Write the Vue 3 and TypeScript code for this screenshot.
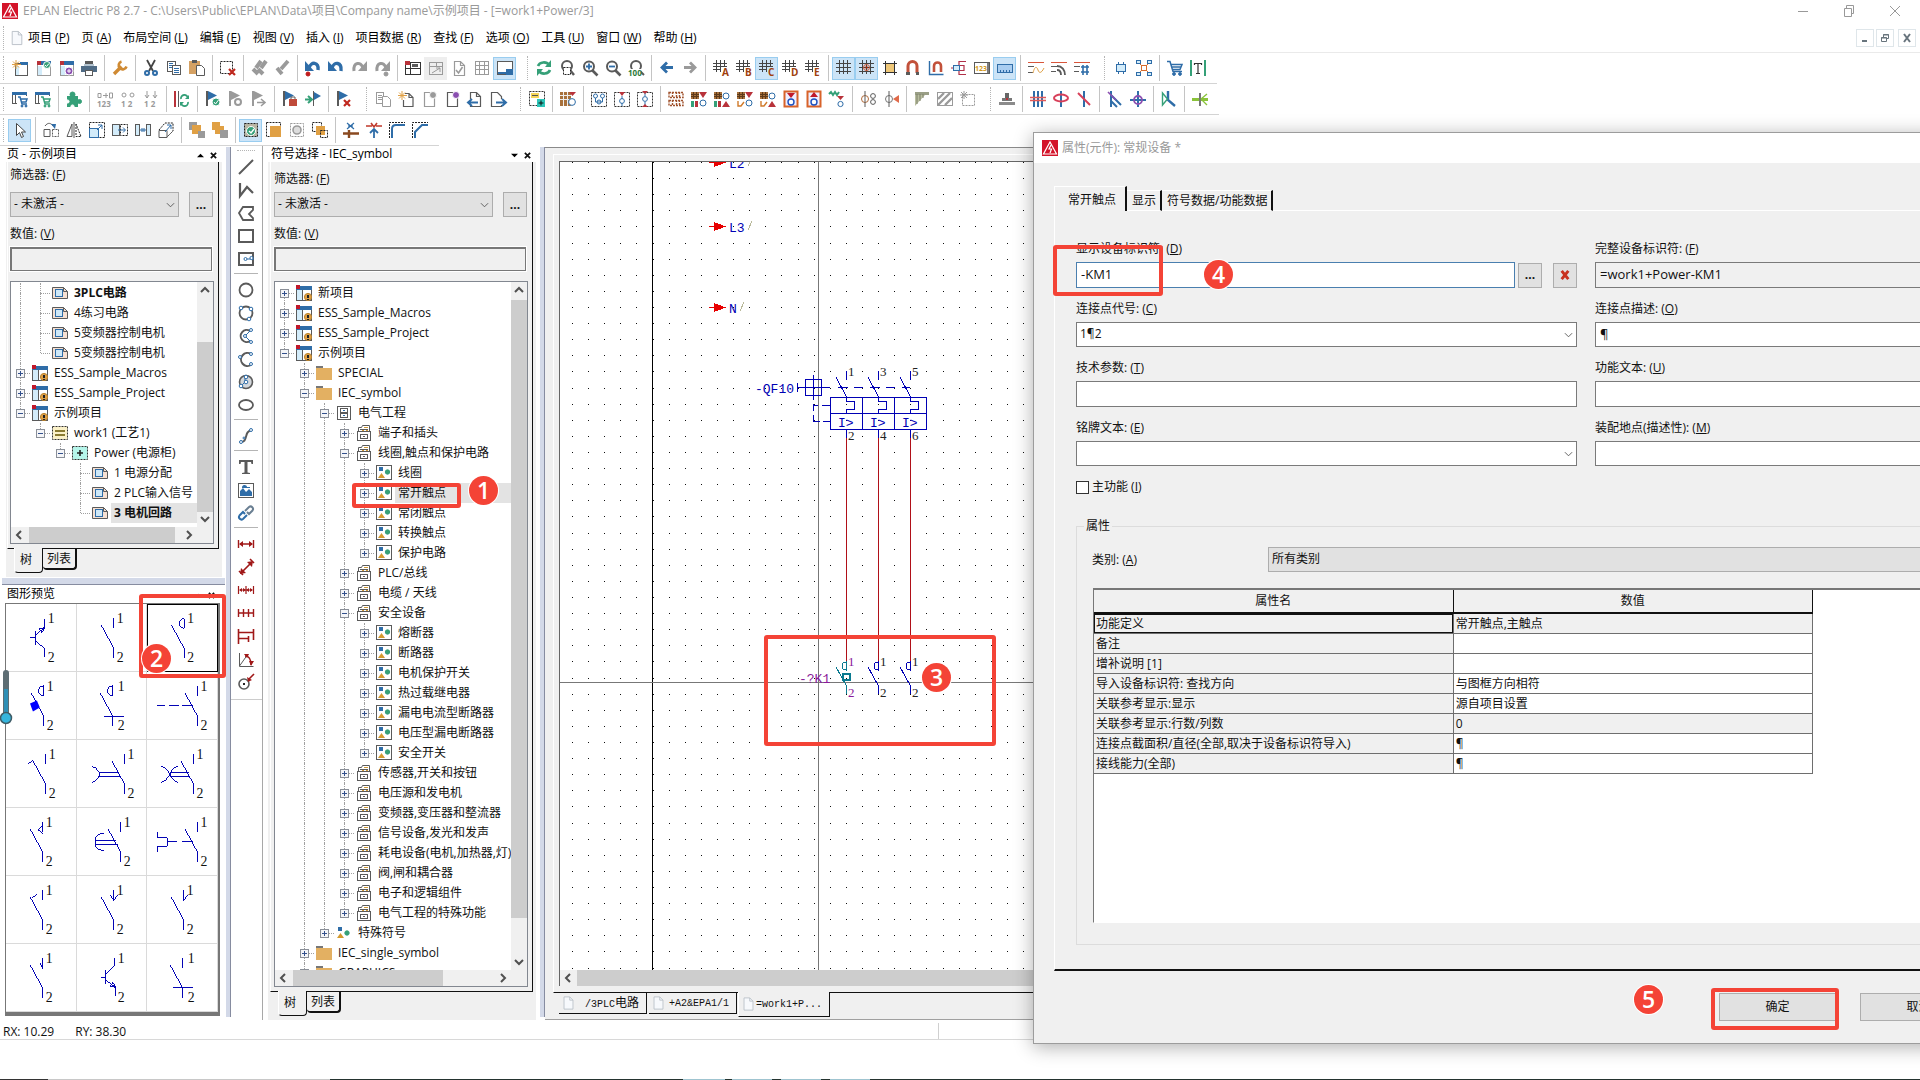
<script setup lang="ts">
const D = '#5a5a5a'
const B = '#2f6da8'
const R = '#b8323a'
const O = '#e0a044'
const G = '#35a078'
const P = '#8a4fb0'
const Y = '#9a9a9a'
const L = '#d3ecfa'

// Small SVG builders shared by the icon set
const p = (d: string, s = D, w = 1, x = '') => `<path d="${d}" fill="none" stroke="${s}" stroke-width="${w}" ${x}/>`
const f = (d: string, c = D) => `<path d="${d}" fill="${c}"/>`
const r = (x: number, y: number, w: number, h: number, c = D) => `<rect x="${x}" y="${y}" width="${w}" height="${h}" fill="${c}"/>`
const o = (x: number, y: number, w: number, h: number, s = D, c = 'none', x2 = '') =>
  `<rect x="${x + 0.5}" y="${y + 0.5}" width="${w - 1}" height="${h - 1}" fill="${c}" stroke="${s}" ${x2}/>`
const c = (x: number, y: number, q: number, s = D, fl = 'none', w = 1) =>
  `<circle cx="${x}" cy="${y}" r="${q}" fill="${fl}" stroke="${s}" stroke-width="${w}"/>`
const t = (x: number, y: number, s: string, col: string, size = 9) =>
  `<text x="${x}" y="${y}" font-size="${size}" font-weight="700" fill="${col}">${s}</text>`
const dash = 'stroke-dasharray="2 1"'
const star = p('M4 0v9M0 4.500h9M1 1.500l6 6M7 1.500l-6 6', O, 1)
const win = o(2, 1, 14, 15, Y, '#fff') + r(2, 1, 14, 4, B) + r(2, 1, 4, 4, R) + r(3, 6, 4, 9, L)
const page = (s = D) => p('M3.500 1.500h6l4 4v10h-10zM9.500 1.500v4h4', s, 1.2)
const grid = p('M3.500 0v14M7.500 0v14M11.500 0v14M0 3.500h15M0 7.500h15M0 11.500h15', '#444')
const gridS = p('M3.500 0v12M7.500 0v12M11.500 0v7M0 3.500h14M0 6.500h14M0 9.500h8', '#444')
const lens = c(7, 6.5, 5, D, 'none', 2) + p('M10.500 10.500l5 5', D, 2.6)
const flag = r(1, 0, 2, 15, D) + f('M3 0l9 4.500-9 4.500z', B)
const flagY = r(1, 0, 2, 15, Y) + f('M3 0l9 4.500-9 4.500z', Y)
const box = (s = '#333') => o(0, 1, 16, 15, s, 'none', dash)
const cart = (s: string) => p('M6 6h2l2 7h5M8 8h7l-1 3H9', s, 1.5) + c(10, 15, 1, s, s) + c(14, 15, 1, s, s)
const smallGrid = r(0, 1, 8, 7, '#a8713c') + p('M2.500 1v7M5.500 1v7M0 3.500h8M0 5.500h8', '#5c3a1a')
const tri = (x: number, y: number) => f(`M${x} ${y}h8l-4 6z`, R)
const triUp = (x: number, y: number) => f(`M${x} ${y}h8l-4 -6z`, R)
const orangeA = r(3, 3, 9, 9, O)

const icons: Record<string, string> = {
  newProject: o(3, 3, 13, 13, D, '#fff') + r(8, 2, 8, 3, B) + r(4, 6, 3, 9, L) + star,
  openProject: win + c(12, 5, 3.5, '#fff', G) + p('M10 5l1.500 1.500 2.500-3', '#fff'),
  closeProject: win + c(11, 11, 4, '#fff', P) + p('M9 11h4M11 9v4', '#fff'),
  printer: r(4, 1, 8, 4) + r(0, 6, 16, 6, '#4f6b85') + r(3, 4, 10, 2, '#b4c4d0') + o(4, 10, 8, 6, D, '#fff'),
  wrench: p('M2 14L9.500 6.500', '#cf8a33', 3.4) + p('M9.500 1.500a4 4 0 1 0 5 5', '#cf8a33', 2.6),
  cut: p('M4 0l6 11M12 0L6 11', '#444', 1.8) + c(4, 13, 2, B, 'none', 2) + c(12, 13, 2, B, 'none', 2),
  copy: o(1, 1, 9, 11, D, '#fff') + p('M3 3.500h4M3 5.500h5M3 7.500h5', B) + o(6, 5, 9, 10, D, '#fff') + p('M8 8.500h5M8 10.500h5M8 12.500h5', B),
  paste: r(0, 1, 11, 13, '#d5a163') + r(3, 0, 5, 3) + f('M8 6h4l3 3v6H8z', '#fff') + p('M7.500 5.500h5l3 3v7h-8z', D),
  delSel: o(0, 1, 13, 13, '#222', 'none', dash) + p('M9 9l6 6M15 9l-6 6', '#c0281e', 2.2),
  brushes: p('M2 9l5 5M10 1L5 8', Y, 4) + p('M7 9l5 5M15 1L10 8', Y, 4),
  brush: p('M3 8l5 6M14 1L7 9', Y, 3.8),
  undoDot: p('M4 8C6 1 14 2 13 10', B, 3.4) + f('M0 1v10h9z', B) + c(3, 14, 2, '#c01a1a', '#c01a1a'),
  undo: p('M4 8C6 1 14 2 13 11', B, 3.4) + f('M0 1v10h9z', B),
  redo: p('M12 8C10 1 2 2 3 11', Y, 3) + f('M16 1v10H7z', Y),
  redoDot: p('M12 8C10 1 2 2 3 11', Y, 3) + f('M16 1v10H7z', Y) + c(12, 14, 2, Y, Y),
  layout: o(0, 2, 16, 13, '#333', '#fff') + p('M5.500 2v13M0 8.500h16', '#333') + r(0, 1, 5, 4, R) + r(7, 4, 6, 3, D),
  layoutOff: o(1, 2, 14, 13, Y) + p('M1 6.500h14M8.500 2v5M4 13l8-5M12 8v4M12 8H8', Y),
  docCheck: page(Y) + p('M5 10l2.500 3 4-6', Y, 1.6),
  table: o(1, 1, 14, 14, Y) + p('M5.500 1v14M10.500 1v14M1 5.500h14M1 9.500h14', Y),
  workspace: o(0, 1, 16, 14, D, '#fff') + r(1, 12, 8, 2, B) + r(9, 9, 7, 6, B),
  refresh: p('M2 6a6 5 0 0 1 11-1M14 10a6 5 0 0 1-11 1', G, 2.6) + f('M15 0v7H9zM1 16V9h6z', G),
  zoomBox: c(8, 6, 5, D, 'none', 2) + p('M11 10l4 5', D, 2.4) + o(4, 7, 8, 8, '#222', '#fff', dash),
  zoomIn: lens + p('M4 6.500h6M7 3.500v6', B, 1.8),
  zoomOut: lens + p('M4 6.500h6', B, 1.8),
  zoom100: c(8, 6, 5, D, 'none', 2) + p('M11 10l5 5', D, 2) + r(1, 9, 12, 7, '#fff') + t(0, 16, '100', '#2c7a3a', 8),
  back: p('M14 7.500H4M8 2.500l-5 5 5 5', B, 2.8),
  forward: p('M2 7.500h10M8 2.500l5 5-5 5', Y, 2.8),
  gridA: gridS + t(9, 16, 'A', '#a0410d', 10),
  gridB: gridS + t(9, 16, 'B', '#a0410d', 10),
  gridC: gridS + t(9, 16, 'C', '#a0410d', 10),
  gridD: gridS + t(9, 16, 'D', '#a0410d', 10),
  gridE: gridS + t(9, 16, 'E', '#a0410d', 10),
  grid,
  gridSnap: grid + c(7.5, 7.5, 3, '#d8552a') + c(7.5, 7.5, 1, '#a03010', '#a03010'),
  frame: o(3, 3, 10, 10, '#333', '#f0c878') + p('M3.500 1v14M12.500 1v14M1 3.500h14M1 12.500h14', '#333'),
  magnet: p('M3 13V6a4.500 4.500 0 0 1 9 0v7', '#c2513a', 3) + r(1, 12, 4, 3, D) + r(11, 12, 3, 3, D),
  magnetAxis: p('M1.500 1v13.500h14', B, 1.4) + p('M6 12V6a3 3 0 0 1 7 0v6', '#c2513a', 2.6),
  plug: p('M15 1.500H8v4M15 14.500H8v-4M3 5.500h10v5H3M0 8h3', '#b03048', 1.2) + o(2, 5, 7, 6, B, L),
  input123: o(0, 2, 16, 12, D, '#fff') + t(1, 11, '123', '#d39a20', 7) + p('M14 3v10', '#222', 1.2),
  ruler: o(0, 4, 16, 9, B, '#a9cdf0') + p('M3.500 10v2M6.500 10v2M9.500 10v2M12.500 10v2', B),
  wave: p('M0 2.500h16', '#d8553a') + p('M0 6.500h6M0 12.500h5', D) + p('M5 13c2-8 4-6 5-3s3 4 6-2', O),
  arcs: p('M0 2.500h16', '#d8553a') + p('M0 6.500h6M0 11.500h5', D) + p('M6 6c5 0 8 4 8 9M6 10c3 0 4 2 4 5', D, 1.8),
  hatch: p('M0 2.500h16', '#d8553a') + p('M0 6.500h6M0 11.500h5', D) + p('M7 7h8M7 12h8M9 5v10M13 5v10', B, 1.6),
  chip: o(3, 4, 10, 8, B, L) + p('M5.500 2v2M10.500 2v2M5.500 12v2M10.500 12v2', B),
  network: o(5, 5, 6, 6, '#d86b2a', '#fff') + p('M5 5L2 2M11 5l3-3M5 11l-3 3M11 11l3 3', '#d86b2a') + o(0, 0, 5, 4, B, L) + o(11, 0, 5, 4, B, L) + o(0, 12, 5, 4, B, L) + o(11, 12, 5, 4, B, L),
  cart: p('M0 1.500h3l3 10h9M4 4.500h11l-2 5H5M4 7h10', B, 1.5) + c(7, 14, 1.4, B, B) + c(13, 14, 1.4, B, B),
  textBars: r(0, 0, 2, 16, G) + r(14, 0, 2, 16, G) + p('M4 3.500h8M8 3v10M6 13.500h4M4.500 3v2M11.500 3v2', '#333', 1.2),

  cartBlue: o(0, 1, 15, 12, D, '#fff') + r(0, 1, 15, 3, B) + p('M3.500 4v9', D) + r(5, 5, 11, 11, '#fff') + cart(B),
  cartGreen: o(0, 1, 15, 12, D, '#fff') + r(0, 1, 15, 3, B) + p('M3.500 4v9', D) + r(5, 5, 11, 11, '#fff') + cart(G),
  puzzle: r(1, 5, 11, 11, G) + c(6.5, 3.5, 2.5, G, G) + c(13.5, 10.5, 2, G, G) + c(1.5, 10.5, 1.6, '#fff', '#fff') + c(6.5, 15.5, 1.6, '#fff', '#fff'),
  numA: p('M1 2.500h3v4H1zM6 4.500h5M9 2v5M12.500 2v5h3v-5z', Y) + t(0, 16, '123', Y, 8),
  numB: c(4, 4, 2, Y) + c(12, 4, 2, Y) + t(1, 16, '1 2', Y, 8),
  numC: p('M4 0v7M12 0v7M2 4l2 3 2-3M10 4l2 3 2-3', Y) + t(1, 16, '1 2', Y, 8),
  barsRefresh: r(0, 0, 2, 16, R) + r(4, 0, 1, 16, D) + p('M7 8a3.500 3.500 0 0 1 7-1M14 11a3.500 3.500 0 0 1-7 1', G, 1.8) + f('M15 4v4h-4zM6 15v-4h4z', G),
  flagOk: flag + c(11, 11, 4, '#fff', G) + p('M9 11l1.500 2 3-4', '#fff'),
  flagGear: flagY + c(10, 11, 3, Y, '#fff', 2),
  flagNext: flagY + p('M6 11.500h7M10 8l4 3.500-4 3.500', Y, 1.6),
  flagLock: flag + r(7, 8, 8, 7, '#c04a3a') + p('M9 8V6h4v2', D),
  flagGo: p('M0 8.500h6M3 5l4 3.500L3 12', G, 2) + r(8, 0, 1, 15, D) + f('M9 1l7 4-7 4z', B),
  flagX: flag + p('M8 9l6 6M14 9l-6 6', '#c0281e', 2.2),
  pagesOff: o(1, 1, 8, 12, Y) + p('M3 4.500h4M3 6.500h4M3 8.500h4', Y) + f('M8 6h4l3 3v6H8z', '#fff') + p('M7.500 5.500h5l3 3v7h-8z', Y),
  pageNew: p('M7 2.500h4l4 4v9H5.500V9M11 2.500v4h4', D, 1.2) + star,
  pageOff: page(Y) + c(12, 4, 3.5, '#fff', Y),
  pagePurple: page() + c(12, 4, 3.5, '#fff', P),
  pageBack: page() + r(0, 8, 9, 6, '#fff') + p('M11 11.500H2M5 8l-4 3.500L5 15', B, 2),
  pageNext: p('M1.500 1.500h6l4 4v10h-10z', D, 1.2) + r(7, 8, 9, 6, '#fff') + p('M6 11.500h9M12 8l4 3.500-4 3.500', B, 2),
  boxPlus: o(0, 0, 16, 15, '#333', 'none', dash) + r(2, 2, 8, 5, '#f5d65a') + p('M3 4.500h6', '#555') + r(8, 8, 8, 8, '#2cc5b8') + p('M9.500 12h5M12 9.500v5', '#111'),
  wall: r(0, 1, 11, 14, '#a8713c') + p('M3.500 1v14M7.500 1v14M0 4.500h11M0 8.500h11', '#eee') + f('M9 1h7l-3.500 4z', R) + c(12, 11, 3.4, B, '#fff'),
  dashA: box() + c(4.5, 5, 2, B) + c(11.5, 5, 2, B) + c(8, 11, 2, B) + p('M4.500 7v4h7V7', B),
  dashB: box() + c(8, 10, 2.4, B) + p('M8 5v3M8 12v3', B) + f('M5 1h6l-3 4z', R),
  dashC: box() + c(8, 8, 2.4, B) + p('M8 0v5M8 11v5', B) + f('M5 0h6l-3 3zM5 16h6l-3-3z', R),
  meshOrange: p('M1 1.500h14v5H1zM1 9.500h14v5H1zM4.500 1v5M8.500 1v5M11.500 1v5M4.500 9v6M8.500 9v6M11.500 9v6', '#a0522d', 1.4, 'stroke-dasharray="2 1"'),
  devA: smallGrid + tri(8, 1) + c(12, 12, 3, B, '#fff') + r(0, 10, 3, 6, G) + r(4, 10, 3, 6, R),
  devB: smallGrid + c(12, 5, 3, B, '#fff') + triUp(8, 16) + r(0, 10, 3, 6, G) + r(4, 10, 3, 6, R),
  devC: smallGrid + tri(8, 1) + c(12, 12, 3, B, '#fff') + p('M1 10v5h3l3-4', '#d07a2a', 1.4),
  devD: smallGrid + c(12, 5, 3, B, '#fff') + triUp(8, 16) + p('M1 10v5h3l3-4', '#d07a2a', 1.4),
  boxDown: o(1, 0, 14, 16, '#d8632a', '#eef', 'stroke-width="2"') + f('M4 2h8l-4 5z', '#c0182a') + c(8, 11, 3, '#1c50c0', '#fff', 1.4),
  boxUp: o(1, 0, 14, 16, '#d8632a', '#eef', 'stroke-width="2"') + f('M4 6h8L8 1z', '#c0182a') + c(8, 11, 3, '#1c50c0', '#fff', 1.4),
  coil: p('M0 3l2-2 2 3 2-3 2 3 2-3', G, 2) + f('M8 5h7l-3.500 4z', R) + c(11.5, 13, 2.6, B),
  sensA: c(5, 8, 3.5, '#b06a3a') + p('M5 0v16', D) + c(13, 5, 2.4, D) + c(13, 11, 2.4, D),
  sensB: c(6, 8, 3.5, '#777') + p('M6 0v16', D) + f('M10 8l6-4v8z', '#e06a4a'),
  dims: r(1, 1, 14, 3, '#9a9f86') + f('M1 4h10L1 15z', '#b9bea0') + p('M3 3v10M6 3v7M9 3v4', '#7c8068'),
  stripes: o(0, 1, 16, 14, Y) + p('M1 8l6-6M1 14L13 2M8 14l7-7', Y, 2.4),
  starBox: o(2, 3, 13, 12, Y, 'none', dash) + p('M4 0v8M0 4h8M1 1l6 6M7 1l-6 6', Y),
  stamp: r(0, 11, 16, 3, '#8b8b8b') + r(3, 7, 10, 3, '#777') + r(6, 2, 4, 5, '#666') + r(7, 7, 2, 2, R),
  bars3: r(3, 0, 2, 16, B) + r(7, 0, 2, 16, B) + r(11, 0, 2, 16, B) + p('M0 6.500h16M0 9.500h16', '#e05a5a', 1.4),
  ellip: p('M8 0v16', B, 2) + '<ellipse cx="8" cy="7" rx="7" ry="3.500" fill="none" stroke="#d8405a" stroke-width="2"/>',
  slash: p('M8 0v16', B, 2) + p('M2 2l12 12', '#d8405a', 2),
  jumpA: p('M4 0v16M4 4l10 10M4 10l6 6', B, 2) + p('M1 1l8 8', P, 1.6),
  jumpB: p('M8 0v16M0 9h16', B, 2) + c(8, 9, 4, P, 'none', 1.8),
  jumpC: p('M7 0v9l7 6', B, 2.4) + p('M1.500 2v12l5-6z', G, 1.4),
  cable: r(0, 7, 16, 3, '#8ac33a') + r(7, 2, 2, 13, '#777') + p('M9 8l6-5M9 8l6 6', '#8ac33a', 1.4),

  cursor: '<path d="M4.500 1.500v12l3-3 2 5 2-1-2-4.500h4z" fill="#fff" stroke="#444"/>',
  rotate: p('M1 7.500h6v7H1zM2 4c3-4 6-3 8 0', D) + f('M8 2l5 0-1 5z', B) + o(9, 7, 7, 8, D, 'none', dash),
  mirror: p('M6 2v12.500H1zM8 0v16', D) + p('M10 2v12.500h5z', '#222', 1, dash),
  scale: o(0, 0, 16, 16, '#222', 'none', dash) + o(0, 6, 10, 10, B, L) + p('M8 8l5-5M9 3h4v4', B),
  stretch: o(0, 2, 8, 12, D, L) + o(8, 2, 8, 12, '#222', 'none', dash) + p('M6 8h7M11 5.500l2.500 2.500-2.500 2.500', B),
  space: o(0, 2, 5, 12, D, L) + o(11, 2, 5, 12, D, L) + p('M5 8h6M7 6v4M9 6v4', B),
  shear: p('M1 8.500h8v7H1z', D) + p('M1 8l6-7h8v8l-6 6', '#222', 1, dash) + p('M7 10l6-7M9 3h4v4', B),
  groupA: r(0, 0, 8, 8, Y) + orangeA + r(9, 9, 7, 7, Y),
  groupB: r(0, 0, 8, 8, O) + r(3, 4, 9, 8, O) + r(8, 8, 8, 8, Y),
  selOk: o(1, 1, 14, 14, '#222', '#b9b4a2', dash) + c(8, 9, 4.5, '#fff', G) + p('M6 9l2 2 3-4', '#fff', 1.4),
  selA: o(0, 0, 15, 15, '#222', 'none', dash) + r(4, 4, 11, 11, O),
  selB: o(1, 1, 14, 14, Y, 'none', dash) + c(8, 8, 4, Y, '#ddd', 1.6),
  selC: o(0, 0, 10, 10, '#222', 'none', dash) + r(4, 4, 9, 9, O) + o(8, 8, 8, 8, '#222', 'none', dash),
  trim: p('M0 11.500h16M6 8v8', '#8a4a20', 2.4) + p('M4 1l7 6M11 1L4 7M5 4h5', B, 1.2),
  extend: p('M0 4h6M10 4h6M5 1l3 4 3-4', '#c0392b', 1.6) + p('M8 16V7M4 11l4-4 4 4', B, 1.8),
  chamferA: p('M3 16V7c0-3 1-4 4-4h9', B, 2) + p('M.5 16V.5H16', '#222', 1, dash),
  chamferB: p('M3 16V10L10 3h6', B, 2) + p('M.5 16V.5H16', '#222', 1, dash),

  line: p('M1 15L15 1', D, 2),
  polyline: p('M2 1v13L9 5l6 6', D, 2.2),
  polygon: p('M5 2h10v3l-4 4 4 4v2H5L1 8z', D, 1.8),
  rect: p('M1 2h14v12H1z', D, 2),
  rectHandle: p('M1 2h14v12H1z', D, 2) + p('M7 8h9', B) + c(7.5, 8, 1.5, B, '#fff') + c(13.5, 7, 1.6, B, '#fff'),
  circle: c(8, 8, 6.5, D, 'none', 1.8),
  circle3: c(8, 8, 6.5, D, 'none', 1.8) + c(3, 3, 1.8, B, '#fff') + c(13, 4, 1.8, B, '#fff') + c(11, 14, 1.8, B, '#fff'),
  arcA: p('M12 3a6 6 0 1 0 0 10', D, 2) + p('M12 3L7 8l6 6', B) + c(13, 2, 1.5, B, '#fff') + c(7, 8, 1.5, B, '#fff') + c(13, 14, 1.5, B, '#fff'),
  arcB: p('M13 3a6.500 6.500 0 1 0 0 11', D, 2) + c(13, 3, 1.5, B, '#fff') + c(2, 6, 1.5, B, '#fff') + c(13, 13, 1.5, B, '#fff'),
  sector: c(8, 8, 6.5, D, '#d4d8dc', 1.6) + p('M7 1v7l-5 5', B) + c(8, 3, 1.8, B, '#fff') + c(8, 8, 1.8, B, '#fff') + c(3, 12, 1.8, B, '#fff'),
  ellipse: '<ellipse cx="8" cy="8" rx="7" ry="5" fill="none" stroke="#5a5a5a" stroke-width="1.800"/>',
  spline: p('M2 14c9 1 3-11 12-12', D, 2) + c(3, 14, 1.5, B, '#fff') + c(13, 2, 1.5, B, '#fff') + c(6, 10, 1, B, '#fff'),
  text: f('M1 1h14v4h-1.500L13 3H9.500v10.500l2.500.5v1H4v-1l2.500-.5V3H3l-.5 2H1z'),
  image: o(0, 1, 16, 15, D, '#fff') + f('M2 14V9l3-3 3 4 3-3 3 3v4z', B) + f('M4 5c1-3 5-2 5 0h3v1H4z', B),
  link: p('M7 9L5 7l-3.500 3.500a2.500 2.500 0 0 0 3.500 3.500l4-4', B, 2) + p('M9 7l2 2 3.500-3.500A2.500 2.500 0 0 0 11 2L7 6', '#6a7f92', 2),
  dimH: p('M.5 4v8M15.500 4v8M2 8h12', '#a01818', 1.4) + f('M1 8l4-3v6zM15 8l-4-3v6z', '#a01818'),
  dimD: p('M1 12l4 4M12 0l4 4M4 13L13 4', '#a01818', 1.6) + f('M2 15l1-6 5 5zM15 2l-6 1 5 5z', '#a01818'),
  dimC: p('M.5 4v8M15.500 4v8M8 4v8M2 8h12', '#a01818', 1.2) + f('M1 8l3-2v4zM15 8l-3-2v4zM8 8L5 6v4zM8 8l3-2v4z', '#a01818'),
  dimI: p('M.5 4v8M15.500 4v8M5.500 4v8M10.500 4v8M1 8h14', '#a01818', 1.4),
  dimB: p('M.5 1v15M15.500 1v11M10.500 8v6M1 4.500h14M1 10.500h9', '#a01818', 1.6),
  dimAngle: p('M1.500 2v13.500h14M1.500 15L10 3', D) + p('M7 5c4 0 6 4 6 9', '#a01818', 1.4) + f('M6 3l5 0-2 4zM11 10h5l-3 5z', '#a01818'),
  dimRadius: c(6, 10, 5, D, 'none', 1.6) + r(5, 9, 2, 2, '#222') + p('M16 0l-5 5', '#a01818', 1.6) + f('M9 3l1 5 4-2z', '#a01818'),

  proj: o(0, 1, 16, 15, D, '#fff') + r(0, 1, 16, 4, B) + r(0, 0, 4, 4, '#c0182a') + r(1, 5, 5, 10, L) + p('M6.500 5v10', D) + c(12, 12, 3.6, '#b9822e', O) + r(11, 10, 2, 3, '#222') + r(11, 14, 2, 1, '#222'),
  sheet: '<path d="M.5 2.500h11l4 4v7H.5z" fill="#f6e0d2" stroke="#5a5a5a"/>' + o(3, 4, 8, 8, B, '#cfe8f7') + p('M11.500 2.500v4h4', D),
  plant: o(0, 1, 16, 14, '#333', '#fbf1c8', dash) + r(3, 5, 10, 2, '#8a7a30') + r(3, 9, 10, 2, '#8a7a30'),
  place: o(0, 1, 16, 14, '#333', '#b5f5ea', dash) + p('M5 8h6M8 5v6', '#222', 1.6),
  folder: r(0, 1, 7, 3, '#777') + r(0, 3, 16, 12, '#e3b062'),
  cabinet: o(1, 1, 14, 14, D, '#fff') + o(4, 3, 8, 5, D) + o(4, 8, 8, 5, D) + r(7, 5, 2, 1, B) + r(7, 10, 2, 1, B),
  drawer: o(1, 6, 14, 10, D, '#fff') + o(4, 9, 8, 5, D) + r(7, 11, 2, 1, D) + p('M2.500 6V2.500h3l1-2h7v6M4 4.500h8', D) + p('M8 2.500h4M6 5.500h2M10 5.500h2', '#cf9a3a'),
  symbols: o(0, 0, 16, 15, D, '#fff') + r(3, 2, 4, 4, B) + f('M2 13l3.500-5L9 13z', '#d39a2e') + c(11.5, 7, 2.2, G, G),
  symbolsBare: r(2, 2, 4, 4, B) + f('M1 13l3.500-5L8 13z', '#d39a2e') + c(11, 8, 2.2, G, G),
  doc: '<path d="M2.500.5h7l4 4v11h-11z" fill="#f7f9fc" stroke="#b5bcc4"/>' + p('M9.500.500v4h4', '#b5bcc4'),
  logo: r(0, 0, 16, 16, '#d31329') + p('M8 2L1.500 14h13z', '#fff', 1.2) + p('M9 5L7 9h2.500L8 13', '#fff', 1.2),
}

const toolbars = [
  'newProject openProject closeProject printer | wrench | cut copy paste | delSel | brushes brush | undoDot undo redo redoDot | layout layoutOff~ docCheck table workspace* : refresh zoomBox zoomIn zoomOut zoom100 | back forward | gridA gridB gridC* gridD gridE | grid* gridSnap* frame magnet magnetAxis plug input123 ruler* | wave arcs hatch : chip network | cart textBars',
  'cartBlue cartGreen | puzzle | numA numB numC | barsRefresh | flagOk flagGear flagNext | flagLock flagGo | flagX : pagesOff pageNew pageOff pagePurple pageBack pageNext : boxPlus | wall | dashA dashB dashC | meshOrange devA devB devC devD boxDown boxUp coil | sensA sensB | dims stripes starBox : stamp | bars3 ellip slash | jumpA jumpB | jumpC | cable',
  'cursor* | rotate mirror scale stretch space shear | groupA groupB | selOk* selA selB selC | trim extend chamferA chamferB',
].map((row) => row.split(' '))

const drawTools = 'line polyline polygon rect rectHandle | circle circle3 arcA arcB sector ellipse | spline | text image link | dimH dimD dimC dimI dimB dimAngle dimRadius'.split(' ')
const iconName = (s: string) => s.replace(/[*~]/, '')

const menus = [
  ['项目', 'P'], ['页', 'A'], ['布局空间', 'L'], ['编辑', 'E'], ['视图', 'V'], ['插入', 'I'],
  ['项目数据', 'R'], ['查找', 'F'], ['选项', 'O'], ['工具', 'U'], ['窗口', 'W'], ['帮助', 'H'],
]

interface Node { level: number; icon: string; text: string; mark?: string; bold?: boolean; on?: boolean }
interface Row extends Node { cells: { up: boolean; down: boolean; own: boolean }[] }

// Works out which dotted guide segments each row of a flat tree needs
function withGuides(nodes: Node[], startsInside: boolean): Row[] {
  return nodes.map((n, i) => {
    const continues = (level: number) => {
      for (const m of nodes.slice(i + 1)) {
        if (m.level < level) return false
        if (m.level === level) return true
      }
      return false
    }
    const cells = Array.from({ length: n.level + 1 }, (_, level) => {
      const own = level === n.level
      const down = continues(level)
      return { own, down, up: own ? i > 0 || startsInside : down }
    })
    return { ...n, cells }
  })
}
const n = (level: number, icon: string, text: string, mark = '', bold = false, on = false): Node => ({ level, icon, text, mark, bold, on })

const pageTree = withGuides([
  n(1, 'sheet', '3PLC电路', '', true), n(1, 'sheet', '4练习电路'), n(1, 'sheet', '5变频器控制电机'), n(1, 'sheet', '5变频器控制电机'),
  n(0, 'proj', 'ESS_Sample_Macros', '+'), n(0, 'proj', 'ESS_Sample_Project', '+'), n(0, 'proj', '示例项目', '-'),
  n(1, 'plant', 'work1 (工艺1)', '-'), n(2, 'place', 'Power (电源柜)', '-'),
  n(3, 'sheet', '1 电源分配'), n(3, 'sheet', '2 PLC输入信号'), n(3, 'sheet', '3 电机回路', '', true, true),
], true)

const symbolTree = withGuides([
  n(0, 'proj', '新项目', '+'), n(0, 'proj', 'ESS_Sample_Macros', '+'), n(0, 'proj', 'ESS_Sample_Project', '+'), n(0, 'proj', '示例项目', '-'),
  n(1, 'folder', 'SPECIAL', '+'), n(1, 'folder', 'IEC_symbol', '-'), n(2, 'cabinet', '电气工程', '-'),
  n(3, 'drawer', '端子和插头', '+'), n(3, 'drawer', '线圈,触点和保护电路', '-'),
  n(4, 'symbols', '线圈', '+'), n(4, 'symbols', '常开触点', '+', false, true), n(4, 'symbols', '常闭触点', '+'),
  n(4, 'symbols', '转换触点', '+'), n(4, 'symbols', '保护电路', '+'),
  n(3, 'drawer', 'PLC/总线', '+'), n(3, 'drawer', '电缆 / 天线', '+'), n(3, 'drawer', '安全设备', '-'),
  n(4, 'symbols', '熔断器', '+'), n(4, 'symbols', '断路器', '+'), n(4, 'symbols', '电机保护开关', '+'), n(4, 'symbols', '热过载继电器', '+'),
  n(4, 'symbols', '漏电电流型断路器', '+'), n(4, 'symbols', '电压型漏电断路器', '+'), n(4, 'symbols', '安全开关', '+'),
  n(3, 'drawer', '传感器,开关和按钮', '+'), n(3, 'drawer', '电压源和发电机', '+'), n(3, 'drawer', '变频器,变压器和整流器', '+'),
  n(3, 'drawer', '信号设备,发光和发声', '+'), n(3, 'drawer', '耗电设备(电机,加热器,灯)', '+'), n(3, 'drawer', '阀,闸和耦合器', '+'),
  n(3, 'drawer', '电子和逻辑组件', '+'), n(3, 'drawer', '电气工程的特殊功能', '+'), n(2, 'symbolsBare', '特殊符号', '+'),
  n(1, 'folder', 'IEC_single_symbol', '+'), n(1, 'folder', 'GRAPHICS', '+'),
], false)

const panels = [
  { key: 'pages', title: '页 - 示例项目', rows: pageTree, v: [60, 170], h: [18, 146], caret: 'M0 6l4-4 4 4z' },
  { key: 'symbols', title: '符号选择 - IEC_symbol', rows: symbolTree, v: [18, 618], h: [18, 150], caret: 'M0 2h8l-4 4z' },
]

// Contact symbols of the preview grid; x is the column of the connection line
const blade = (x: number, s = 14) => `M${x - 13} 21L${x} 45v10M${x} ${s}V24`
const dome = (x: number) => `M${x} 14c-7 0-7 10 0 10`
const previews = [
  { x: 39, d: 'M39 15v9L30 31M30 27v15M24 34h6M30 38l9 7v9M39 24l-6 1M39 24l-3 5M33 25l3 4' },
  { x: 37, d: blade(37) },
  { x: 37, d: blade(37) + dome(37), on: true },
  { x: 38, d: blade(38) + dome(38), fill: 'M24 32l7-3 3 7-7 4z' },
  { x: 36, d: blade(36) + dome(36) + 'M27 45h20', dx: 2 },
  { x: 51, d: blade(51) + 'M10 34h8M22 34h10M35 34h11' },
  { x: 40, d: blade(40) + 'M27 21l-5 3' },
  { x: 48, d: blade(48) + 'M22 33h20M22 37h21M22 33v4M15 27q4 0 7 6M15 43q5-1 7-6' },
  { x: 47, d: blade(47) + 'M23 33h19M23 37h20M23 33v4M14 27q5 0 9 8M14 43q5-1 9-8M31 27q-5 0-8 8M31 43q-5-1-8-8' },
  { x: 37, d: blade(37) + 'M37 17l-5 5 5 4' },
  { x: 44, d: blade(44) + 'M18 33h21M18 37h23M27 26q-9 0-9 7M27 43q-9 0-9-7M18 33v4' },
  { x: 51, d: blade(51) + 'M10 24v6h10v9H10v6M20 34h10M35 34h11' },
  { x: 37, d: blade(37) + 'M26 22l5-3' },
  { x: 37, d: blade(37) + 'M33 19l4 6 4-6' },
  { x: 37, d: blade(37) + 'M37 25l4-6' },
  { x: 37, d: blade(37) + 'M37 25l-3-6' },
  { x: 38, d: 'M38 14v8L29 30M29 26v15M24 34h5M29 37l10 7v9M39 44l-6-1M39 44l-3-5M33 43l3-4' },
  { x: 36, d: blade(36) + 'M26 44h20', dx: 2 },
]

const gridXs = Array.from({ length: 84 }, (_, i) => Math.round(572 + i * 16.11))
const gridYs = Array.from({ length: 51 }, (_, i) => Math.round(162 + i * 16.11))
const dots = gridYs.map((y) => gridXs.map((x) => `M${x} ${y}h1v1h-1z`).join('')).join('')
const feeds = [{ y: 162, name: 'L2' }, { y: 226, name: 'L3' }, { y: 307, name: 'N' }]
const poles = [{ x: 846, a: '1', b: '2' }, { x: 878, a: '3', b: '4' }, { x: 910, a: '5', b: '6' }]

const props = [
  ['功能定义', '常开触点,主触点', 'g'], ['备注', '', ''], ['增补说明 [1]', '', ''], ['导入设备标识符: 查找方向', '与图框方向相符', ''],
  ['关联参考显示:显示', '源自项目设置', ''], ['关联参考显示:行数/列数', '0', 'g'],
  ['连接点截面积/直径(全部,取决于设备标识符导入)', '¶', ''], ['接线能力(全部)', '¶', ''],
]
</script>

<template>
  <div class="app">
    <header class="titlebar">
      <svg class="ico" viewBox="0 0 16 16" v-html="icons.logo" />
      <h1>EPLAN Electric P8 2.7 - C:\Users\Public\EPLAN\Data\项目\Company name\示例项目 - [=work1+Power/3]</h1>
      <div class="winbtns">
        <button aria-label="最小化"><svg viewBox="0 0 12 12"><path d="M1 6.500h10" /></svg></button>
        <button aria-label="还原"><svg viewBox="0 0 12 12"><path d="M1.500 3.500h7v8h-7zM3.500 3.500v-3h7v8h-2" /></svg></button>
        <button aria-label="关闭"><svg viewBox="0 0 12 12"><path d="M1 1l10 10M11 1L1 11" /></svg></button>
      </div>
    </header>

    <nav class="menubar">
      <i class="grip" />
      <svg class="ico" viewBox="0 0 16 16" v-html="icons.doc" />
      <a v-for="m in menus" :key="m[0]" href="#">{{ m[0] }} (<u>{{ m[1] }}</u>)</a>
      <div class="mdibtns">
        <button aria-label="最小化子窗口"><svg viewBox="0 0 10 10"><path d="M2 8h5" stroke-width="2" /></svg></button>
        <button aria-label="还原子窗口"><svg viewBox="0 0 10 10"><path d="M1.500 4.500h5v4h-5zM3.500 4V1.500h5v4H7M1 5h6M3 2h6" /></svg></button>
        <button class="last" aria-label="关闭子窗口"><svg viewBox="0 0 10 10"><path d="M2 1l6 8M8 1L2 9" stroke-width="2" /></svg></button>
      </div>
    </nav>

    <div v-for="(bar, bi) in toolbars" :key="bi" class="toolbar" role="toolbar">
      <i class="grip" />
      <template v-for="(tool, i) in bar" :key="i">
        <i v-if="tool === '|'" class="sep" />
        <i v-else-if="tool === ':'" class="grip mid" />
        <button v-else class="tool" :class="{ on: tool.endsWith('*'), off: tool.endsWith('~') }" :aria-label="iconName(tool)">
          <svg class="ico" viewBox="0 0 16 16" v-html="icons[iconName(tool)]" />
        </button>
      </template>
    </div>

    <main class="work">
      <template v-for="panel in panels" :key="panel.key">
        <div class="column" :class="panel.key">
          <section class="panel">
            <div class="panel-title">
              <h2>{{ panel.title }}</h2>
              <button aria-label="菜单"><svg viewBox="0 0 8 8"><path :d="panel.caret" /></svg></button>
              <button aria-label="关闭"><svg viewBox="0 0 8 8"><path d="M1 1l6 6M7 1L1 7" stroke="#111" stroke-width="2" /></svg></button>
            </div>
            <div class="panel-body">
              <div class="frame">
                <label class="filter-label" :for="panel.key + 'f'">筛选器: (<u>F</u>)</label>
                <div class="filter-row">
                  <div class="drop grey">
                    <select :id="panel.key + 'f'"><option>- 未激活 -</option></select>
                    <svg viewBox="0 0 10 6"><path d="M1 1l4 4 4-4" /></svg>
                  </div>
                  <button class="dots" aria-label="浏览">...</button>
                </div>
                <label class="value-label" :for="panel.key + 'v'">数值: (<u>V</u>)</label>
                <input :id="panel.key + 'v'" class="value-input" type="text" />
                <div class="treebox">
                  <ul class="tree">
                    <li v-for="(row, i) in panel.rows" :key="i">
                      <span v-for="(cell, k) in row.cells" :key="k" class="cell" :class="{ up: cell.up, down: cell.down, own: cell.own }">
                        <svg v-if="cell.own && row.mark" class="mark" viewBox="0 0 9 9">
                          <rect x=".5" y=".5" width="8" height="8" fill="#f4f5f8" stroke="#8a8f98" />
                          <path :d="row.mark === '+' ? 'M2 4.500h5M4.500 2v5' : 'M2 4.500h5'" stroke="#33508c" />
                        </svg>
                      </span>
                      <svg class="ico" viewBox="0 0 16 16" v-html="icons[row.icon]" />
                      <span class="name" :class="{ bold: row.bold, on: row.on }">{{ row.text }}</span>
                    </li>
                  </ul>
                  <div class="vbar">
                    <svg viewBox="0 0 10 10"><path d="M1 7l4-4 4 4" /></svg>
                    <svg viewBox="0 0 10 10"><path d="M1 3l4 4 4-4" /></svg>
                    <i class="thumb" :style="{ top: panel.v[0] + 'px', height: panel.v[1] + 'px' }" />
                  </div>
                  <div class="hbar">
                    <svg viewBox="0 0 10 10"><path d="M7 1L3 5l4 4" /></svg>
                    <svg viewBox="0 0 10 10"><path d="M3 1l4 4-4 4" /></svg>
                    <i class="thumb" :style="{ left: panel.h[0] + 'px', width: panel.h[1] + 'px' }" />
                  </div>
                  <i class="corner" />
                </div>
              </div>
              <div class="tabs">
                <button class="tab on">树</button>
                <button class="tab">列表</button>
              </div>
            </div>
          </section>

          <template v-if="panel.key === 'pages'">
            <i class="hsplit" />
            <section class="preview">
              <div class="panel-title">
                <h2>图形预览</h2>
                <button aria-label="菜单"><svg viewBox="0 0 8 8"><path d="M0 6l4-4 4 4z" /></svg></button>
                <button aria-label="关闭"><svg viewBox="0 0 8 8"><path d="M1 1l6 6M7 1L1 7" stroke="#111" stroke-width="2" /></svg></button>
              </div>
              <div class="sheet">
                <svg v-for="(s, i) in previews" :key="i" :class="{ on: s.on }" viewBox="0 0 70 68">
                  <path :d="s.d" fill="none" stroke="#0000b4" shape-rendering="crispEdges" />
                  <path v-if="s.fill" :d="s.fill" fill="#0000ff" />
                  <text :x="s.x + 3 + (s.dx ?? 0)" y="19">1</text>
                  <text :x="s.x + 3 + (s.dx ?? 0)" y="59">2</text>
                </svg>
              </div>
            </section>
          </template>
        </div>
        <i class="vsplit" />
        <div v-if="panel.key === 'pages'" class="drawbar" role="toolbar">
          <div class="drawset">
            <i class="hgrip" />
            <template v-for="(tool, i) in drawTools" :key="i">
              <i v-if="tool === '|'" class="hsep" />
              <button v-else class="tool" :aria-label="tool"><svg class="ico" viewBox="0 0 16 16" v-html="icons[tool]" /></button>
            </template>
          </div>
        </div>
      </template>

      <section class="editor">
        <div class="bevel">
          <div class="canvas">
            <svg class="drawing">
              <g transform="translate(-560 -162)" shape-rendering="crispEdges" fill="none">
                <path :d="dots" fill="#111" />
                <path d="M652.500 162v820" stroke="#000" />
                <path d="M818.500 162v820M560 682.500h1400" stroke="#777" />
                <g v-for="fd in feeds" :key="fd.name">
                  <path :d="`M709 ${fd.y + 0.5}h8`" stroke="#e00000" />
                  <path :d="`M714 ${fd.y - 4}l12 4.500-12 4.500z`" fill="#e80000" />
                  <text x="729" :y="fd.y + 6" class="mono">{{ fd.name }}</text>
                  <path :d="`M${fd.name === 'N' ? 740 : 748} ${fd.y + 4}l4-9`" stroke="#b9b99a" />
                </g>
                <text x="755" y="393" class="mono">-QF10</text>
                <g stroke="#0000b4">
                  <path d="M797.500 383v9M797 387.500h33M805.500 379.500h16v16h-16zM813.500 375v25M838 387.500h10M854 387.500h9M870 387.500h10M886 387.500h9M902 387.500h8" />
                  <path d="M813.500 404v7M813.500 415v6.500h6M813 405.500h5M822 405.500h8M823 421.500h7" />
                  <path d="M830.500 397.500h96v32h-96zM830.500 413.500h96M862.500 397.500v32M894.500 397.500v32" />
                  <path v-for="pl in poles" :key="pl.x" :d="`M${pl.x + 0.5} 371v9M${pl.x - 10} 377L${pl.x + 0.5} 397v4.500h8v8h-8v4M${pl.x + 0.5} 429v9`" />
                </g>
                <g v-for="(pl, i) in poles" :key="pl.a">
                  <text :x="pl.x - 8" y="427" class="mono">I&gt;</text>
                  <text :x="pl.x + 2" y="376" class="num">{{ pl.a }}</text>
                  <text :x="pl.x + 2" y="440" class="num">{{ pl.b }}</text>
                  <path :d="`M${pl.x + 0.5} 438v224`" stroke="#b01018" />
                  <path :d="`M${pl.x + 0.5} 661v9c-6 0-6-8 0-8M${pl.x - 10} 667L${pl.x + 0.5} 686v8`" :stroke="i ? '#0000b4' : '#0a7a90'" />
                  <text :x="pl.x + 2" y="666" class="num" :class="{ hot: !i }">1</text>
                  <text :x="pl.x + 2" y="697" class="num" :class="{ hot: !i }">2</text>
                </g>
                <path d="M843 674h7v6h-7z" stroke="#0a7a90" stroke-width="2" />
                <text x="799" y="683" class="mono hot">-?K1</text>
              </g>
            </svg>
            <div class="hbar wide">
              <svg viewBox="0 0 10 10"><path d="M7 1L3 5l4 4" /></svg>
              <i class="thumb rest" />
            </div>
          </div>
        </div>
        <div class="doctabs">
          <button class="doctab"><svg class="ico" viewBox="0 0 16 16" v-html="icons.doc" /><span>/3PLC<b>电路</b></span></button>
          <button class="doctab"><svg class="ico" viewBox="0 0 16 16" v-html="icons.doc" /><span>+A2&amp;EPA1/1</span></button>
          <button class="doctab on"><svg class="ico" viewBox="0 0 16 16" v-html="icons.doc" /><span>=work1+P...</span></button>
        </div>
      </section>
    </main>

    <footer class="status"><span>RX: 10.29</span><span>RY: 38.30</span></footer>
    <div class="taskbar"><i class="a" /><i class="b" /><i class="c" /></div>

    <section class="dialog" role="dialog" aria-label="属性(元件)">
      <div class="dlg-title"><svg class="ico" viewBox="0 0 16 16" v-html="icons.logo" /><h2>属性(元件): 常规设备 *</h2></div>
      <div class="dlg-tabs">
        <button class="on">常开触点</button><button>显示</button><button>符号数据/功能数据</button><i />
      </div>
      <form class="dlg-page" @submit.prevent>
        <div class="fields">
          <div class="field">
            <label for="dt">显示设备标识符: (<u>D</u>)</label>
            <div class="combo">
              <input id="dt" class="focus" type="text" value="-KM1" />
              <button type="button" class="dots" aria-label="浏览">...</button>
              <button type="button" class="dots clear" aria-label="清除"><svg viewBox="0 0 12 12"><path d="M2 1l8 10M10 1L2 11" stroke="#c8311e" stroke-width="3.500" /></svg></button>
            </div>
          </div>
          <div class="field"><label for="full">完整设备标识符: (<u>F</u>)</label><input id="full" class="ro" type="text" value="=work1+Power-KM1" readonly /></div>
          <div class="field">
            <label for="cp">连接点代号: (<u>C</u>)</label>
            <div class="drop"><select id="cp"><option>1¶2</option></select><svg viewBox="0 0 10 6"><path d="M1 1l4 4 4-4" /></svg></div>
          </div>
          <div class="field"><label for="cd">连接点描述: (<u>O</u>)</label><input id="cd" class="short" type="text" value="¶" /></div>
          <div class="field"><label for="tp">技术参数: (<u>T</u>)</label><input id="tp" type="text" /></div>
          <div class="field"><label for="ft">功能文本: (<u>U</u>)</label><input id="ft" type="text" /></div>
          <div class="field">
            <label for="np">铭牌文本: (<u>E</u>)</label>
            <div class="drop"><select id="np"><option></option></select><svg viewBox="0 0 10 6"><path d="M1 1l4 4 4-4" /></svg></div>
          </div>
          <div class="field"><label for="ml">装配地点(描述性): (<u>M</u>)</label><input id="ml" class="short" type="text" /></div>
        </div>
        <div class="check"><input id="mf" type="checkbox" /><label for="mf">主功能 (<u>I</u>)</label></div>
        <fieldset>
          <legend>属性</legend>
          <div class="category">
            <label for="cat">类别: (<u>A</u>)</label>
            <div class="drop grey"><select id="cat"><option>所有类别</option></select></div>
          </div>
          <div class="tablebox">
            <table>
              <thead><tr><th>属性名</th><th>数值</th></tr></thead>
              <tbody>
                <tr v-for="(row, i) in props" :key="row[0]">
                  <td class="g" :class="{ cur: i === 0 }">{{ row[0] }}</td><td :class="row[2]">{{ row[1] }}</td>
                </tr>
              </tbody>
            </table>
          </div>
        </fieldset>
      </form>
      <div class="dlg-foot"><button>确定</button><button>取消</button></div>
    </section>

    <svg class="thermo" viewBox="0 0 13 57">
      <rect x="3" y="1" width="6" height="46" rx="3" fill="#5d6d73" /><rect x="4" y="20" width="4" height="30" fill="#2f8fb5" />
      <circle cx="6" cy="49" r="5.500" fill="#35b5dd" stroke="#3f5c66" stroke-width="1.500" />
    </svg>
    <i class="box b1" /><i class="box b2" /><i class="box b3" /><i class="box b4" /><i class="box b5" />
    <span v-for="k in 5" :key="k" class="ball" :class="'n' + k">{{ k }}</span>
  </div>
</template>

<style>
body { margin: 0; background: #fff; }
</style>

<style scoped>
* { box-sizing: border-box; }
.app { position: relative; display: flex; flex-direction: column; width: 100%; height: 100vh; overflow: hidden; background: #fff; color: #111; font: 12px/18px "Open Sans", "Noto Sans CJK SC", sans-serif; }
button, input, select { font: inherit; color: inherit; margin: 0; border-radius: 0; }
button { padding: 0; border: 0; background: none; }
h1, h2 { margin: 0; font: inherit; white-space: nowrap; }
a { color: inherit; text-decoration: none; }
.ico { width: 16px; height: 16px; flex: none; overflow: visible; }

.titlebar { display: flex; align-items: center; height: 24px; padding: 0 18px 2px 2px; gap: 5px; color: #999; flex: none; }
.winbtns { display: flex; gap: 33px; margin-left: auto; }
.winbtns button { width: 13px; height: 14px; }
.winbtns svg { display: block; width: 12px; height: 12px; fill: none; stroke: #999; }
.menubar { display: flex; align-items: center; height: 29px; padding-right: 4px; border-bottom: 1px solid #eaeaea; flex: none; color: #000; }
.menubar a { margin-right: 12px; white-space: nowrap; }
.menubar .ico { width: 14px; margin: 0 4px 0 2px; }
.mdibtns { display: flex; gap: 2px; margin-left: auto; }
.mdibtns button { width: 18px; height: 18px; border: 1px solid #dfe6ea; }
.mdibtns .last { margin-left: 2px; }
.mdibtns svg { display: block; width: 10px; height: 10px; margin: 3px; fill: none; stroke: #68747d; }

.toolbar { display: flex; align-items: center; width: fit-content; height: 31px; padding-right: 8px; border-bottom: 1px solid #d4d4d4; flex: none; }
.grip { width: 1px; height: 24px; margin: 0 4px 0 3px; border-left: 1px dotted #b5b5b5; flex: none; }
.grip.mid { margin-left: 11px; }
.sep { width: 1px; height: 26px; margin: 0 3px 0 4px; background: #c4c4c4; flex: none; }
.tool { display: grid; place-items: center; width: 23px; height: 23px; flex: none; }
.tool.on { background: #cce4f7; border: 1px solid #99cdf0; }
.tool.off { background: #eee; }

.work { display: flex; flex: 1; min-height: 0; }
.column { display: flex; flex-direction: column; flex: none; min-height: 0; }
.column.pages { width: 226px; padding: 0 4px 0 6px; }
.column.symbols { width: 277px; padding: 0 4px 0 5px; }
.vsplit { width: 5px; margin: 1px 0 3px; background: #d3d9e8; border-right: 1px solid #868ca0; flex: none; }
.hsplit { height: 7px; margin: 1px -3px 0 -4px; background: #d3d9e8; border-bottom: 1px solid #868ca0; flex: none; }
.panel { display: flex; flex-direction: column; }
.pages .panel { height: 431px; flex: none; }
.symbols .panel { flex: 1; min-height: 0; }
.panel-title { display: flex; align-items: center; gap: 4px; height: 16px; padding: 0 3px 0 1px; flex: none; color: #000; }
.symbols .panel-title { padding-left: 3px; }
.panel-title h2 { flex: 1; }
.panel-title button { width: 9px; height: 10px; }
.panel-title svg { display: block; width: 7px; height: 7px; margin-top: 2px; }
.panel-body { display: flex; flex-direction: column; flex: 1; min-height: 0; background: #f0f0f0; }
.frame { display: flex; flex-direction: column; flex: 1; min-height: 0; margin: 0 3px 0 1px; padding: 0 4px 4px 2px; border-right: 1px solid #111; border-bottom: 1px solid #111; border-left: 1px solid #fff; }
.symbols .frame { margin-left: 2px; padding-left: 3px; }
.filter-label { height: 30px; padding-top: 4px; flex: none; }
.symbols .filter-label { padding-top: 8px; }
.filter-row { display: flex; gap: 10px; height: 25px; margin-right: 1px; flex: none; }
.filter-row .drop { flex: 1; }
.drop { position: relative; height: 25px; }
.drop select { width: 100%; height: 100%; padding: 0 3px 1px; border: 1px solid #7a7a7a; background: #fff; appearance: none; outline: 0; }
.drop.grey select { border-color: #adadad; background: #e1e1e1; }
.drop svg { position: absolute; right: 4px; top: 10px; width: 9px; height: 6px; fill: none; stroke: #555; }
.dots { width: 24px; height: 25px; border: 1px solid #adadad; background: #e1e1e1; font-weight: 700; }
.value-label { margin-top: 8px; height: 22px; flex: none; }
.value-input { height: 24px; margin-right: 2px; border: 2px solid #777; border-right-width: 1px; border-bottom-width: 1px; outline: 1px solid #fff; background: #f0f0f0; flex: none; }
.treebox { display: grid; grid-template-columns: 1fr 16px; grid-template-rows: 1fr 16px; flex: 1; min-height: 0; margin-top: 10px; border: 1px solid #828790; background: #fff; }
.tree { margin: 0; padding: 1px 0 0; list-style: none; overflow: hidden; min-width: 0; min-height: 0; }
.tree li { display: flex; align-items: center; height: 20px; white-space: nowrap; }
.cell { position: relative; width: 20px; height: 20px; flex: none; }
.cell.up::before, .cell.down::after { content: ""; position: absolute; left: 9px; height: 10px; border-left: 1px dotted #a0a0a0; }
.cell.up::before { top: 0; }
.cell.down::after { top: 10px; }
.own { background: linear-gradient(90deg, #a0a0a0 50%, transparent 50%) 10px 10px / 2px 1px repeat-x; background-clip: content-box; padding-left: 10px; }
.mark { position: absolute; z-index: 1; left: 5px; top: 6px; width: 9px; height: 9px; }
.tree .ico { margin-left: 1px; }
.name { flex: 1; margin-left: 3px; padding-left: 3px; height: 20px; line-height: 19px; overflow: hidden; }
.name.bold { font-weight: 700; }
.name.on { background: #e3e3e3; }
.vbar, .hbar { position: relative; display: flex; justify-content: space-between; background: #f0f0f0; }
.vbar { flex-direction: column; }
.vbar svg, .hbar svg { width: 10px; height: 10px; margin: 3px; fill: none; stroke: #505050; stroke-width: 2; }
.thumb { position: absolute; inset: 0; background: #cdcdcd; }
.thumb.rest { left: 17px; }
.corner { background: #f0f0f0; }
.tabs { display: flex; align-items: flex-start; height: 28px; padding-left: 8px; flex: none; }
.symbols .tabs { padding-left: 10px; }
.tab { width: 34px; height: 21px; border: 1px solid #111; border-width: 0 2px 2px 0; border-radius: 0 0 4px 4px; }
.tab.on { width: 29px; height: 25px; margin-top: -1px; padding-left: 5px; border-width: 0 1px 1px 0; border-left: 1px solid #fff; background: #f0f0f0; text-align: left; }

.preview { display: flex; flex-direction: column; flex: 1; min-height: 0; margin: 0 2px 4px -1px; }
.preview .panel-title { height: 18px; padding-left: 2px; }
.sheet { display: grid; grid-template-columns: repeat(3, 1fr); grid-template-rows: repeat(6, 1fr); flex: 1; min-height: 0; border: 1px solid #777; border-right-width: 2px; border-bottom-width: 4px; }
.sheet svg { width: 100%; height: 100%; border: 1px solid #dadada; border-width: 0 1px 1px 0; }
.sheet svg.on { border: 1px solid #000; }
.sheet text { font: 14px "Liberation Serif", serif; fill: #111; }

.drawbar { width: 32px; border-right: 1px solid #a8a8a8; flex: none; }
.drawset { display: flex; flex-direction: column; align-items: center; padding: 0 2px 6px 0; border-bottom: 1px solid #ccc; }
.hgrip { width: 18px; height: 1px; margin: 4px 0; border-top: 1px dotted #b5b5b5; }
.hsep { width: 24px; height: 1px; margin: 3px 0 4px; background: #b5b5b5; }

.editor { display: flex; flex-direction: column; flex: 1; min-width: 0; margin-top: 1px; border-top: 1px solid #8a8a8a; border-bottom: 1px solid #a0a0a0; background: #f0f0f0; }
.bevel { display: flex; flex: 1; min-height: 0; margin: 6px 0 0 8px; padding: 6px 0 6px 5px; border: 1px solid #fff; border-width: 1px 0 0 1px; border-bottom: 1px solid #111; }
.canvas { display: flex; flex-direction: column; flex: 1; min-width: 0; border: 1px solid #666; border-width: 1px 0 0 1px; background: #fff; }
.drawing { display: block; width: 100%; flex: 1; min-height: 0; }
.hbar.wide { height: 16px; flex: none; }
.mono { font: 13px "Liberation Mono", monospace; fill: #0000b4; }
.num { font: 13px "Liberation Serif", serif; fill: #222; }
.hot { fill: #8a1a9a; }
.doctabs { display: flex; align-items: flex-start; height: 26px; padding-left: 14px; flex: none; }
.doctab { display: flex; align-items: center; justify-content: space-between; width: 88px; height: 21px; margin-right: 2px; padding: 0 7px 0 3px; border: 1px solid #111; border-width: 0 1px 1px 0; font: 10px "Liberation Mono", monospace; white-space: nowrap; }
.doctab b { font: 12px/12px "Noto Sans CJK SC", sans-serif; }
.doctab .ico { width: 13px; }
.doctab.on { width: 92px; height: 25px; margin: -1px 0 0 -1px; border-left: 1px solid #fff; background: #f0f0f0; }

.status { position: relative; display: flex; gap: 21px; height: 20px; padding: 3px 0 0 3px; border-bottom: 1px solid #d8d8d8; flex: none; line-height: 18px; }
.status::after { content: ""; position: absolute; left: 938px; top: 3px; bottom: 0; border-left: 1px solid #d0d0d0; }
.taskbar { display: flex; height: 40px; padding-top: 39px; flex: none; }
.taskbar .a { width: 48px; background: #333; }
.taskbar .b { width: 282px; background: #c8c8c8; }
.taskbar .c { flex: 1; background: linear-gradient(90deg, #24332f 353px, #9fc4d0 353px 395px, #24332f 395px 402px, #9fc4d0 402px 442px, #24332f 442px 451px, #9fc4d0 451px 491px, #24332f 491px 500px, #9fc4d0 500px 540px, #24332f 540px); }

.dialog { position: absolute; left: 1033px; top: 132px; bottom: 36px; display: flex; flex-direction: column; width: 1084px; border: 1px solid #9c9c9c; background: #f0f0f0; box-shadow: 0 3px 18px rgba(0, 0, 0, .32); }
.dlg-title { display: flex; align-items: center; gap: 4px; height: 30px; padding-left: 8px; background: #fff; color: #999; flex: none; }
.dlg-tabs { display: flex; align-items: flex-end; height: 48px; padding-left: 20px; flex: none; }
.dlg-tabs button { height: 21px; padding: 0 4px 0 5px; border-right: 2px solid #111; border-top: 1px solid #fff; border-bottom: 1px solid #fff; white-space: nowrap; }
.dlg-tabs .on { height: 25px; padding: 2px 9px 0 13px; border-left: 1px solid #fff; border-bottom: 0; }
.dlg-tabs i { flex: 1; border-bottom: 1px solid #fff; }
.dlg-page { display: flex; flex-direction: column; flex: 1; min-height: 0; margin: 0 0 0 20px; padding: 29px 20px 24px 21px; border-left: 1px solid #fff; border-bottom: 2px solid #111; }
.fields { display: grid; grid-template-columns: 1fr 1fr; gap: 12px 18px; }
.field { display: flex; flex-direction: column; gap: 4px; min-width: 0; }
.field input { width: 100%; height: 26px; padding: 0 4px 2px; border: 1px solid #7a7a7a; background: #fff; font-size: 13px; outline: 0; }
.field input.short { height: 25px; }
.field input.ro { background: #f0f0f0; }
.field input.focus { border-color: #4a7faf; flex: 1; min-width: 0; }
.combo { display: flex; align-items: center; gap: 3px; }
.combo .clear { display: grid; place-items: center; margin-left: 8px; }
.combo .clear svg { width: 10px; height: 12px; }
.check { display: flex; align-items: center; gap: 3px; height: 18px; margin-top: 12px; }
.check input { width: 13px; height: 13px; appearance: none; border: 1px solid #333; background: #fff; }
fieldset { display: flex; flex-direction: column; flex: 1; min-height: 0; min-width: 0; margin: 21px 0 0; padding: 12px 15px 21px; border: 1px solid #dcdcdc; }
legend { margin-left: -8px; padding: 0 2px; }
.category { display: flex; align-items: center; flex: none; }
.category label { width: 176px; }
.category .drop { flex: 1; }
.tablebox { flex: 1; min-height: 0; margin: 16px 0 0 1px; border: 1px solid #777; border-bottom-color: #fff; border-top-width: 2px; background: #fff; overflow: hidden; }
table { border-collapse: collapse; table-layout: fixed; width: 719px; }
th { height: 23px; padding: 0; border: 1px solid #111; border-width: 0 1px 2px 0; background: #f0f0f0; font-weight: 400; }
td { height: 20px; padding: 0 2px; border: 1px solid #6e6e6e; border-left: 0; white-space: nowrap; line-height: 17px; }
td.g { background: #f0f0f0; }
td.cur { box-shadow: inset 0 0 0 1px #111; }
.dlg-foot { display: flex; justify-content: flex-end; gap: 24px; height: 72px; padding: 22px 139px 0 0; flex: none; }
.dlg-foot button { width: 117px; height: 28px; border: 1px solid #adadad; background: #e1e1e1; }

.thermo { position: absolute; left: 0; top: 669px; width: 13px; height: 57px; }
.box { position: absolute; border: 4px solid #f44336; border-radius: 3px; }
.b1 { left: 352px; top: 483px; width: 109px; height: 25px; }
.b2 { left: 139px; top: 594px; width: 87px; height: 84px; }
.b3 { left: 764px; top: 635px; width: 232px; height: 111px; }
.b4 { left: 1053px; top: 245px; width: 110px; height: 51px; }
.b5 { left: 1711px; top: 988px; width: 128px; height: 42px; }
.ball { position: absolute; width: 29px; height: 29px; border-radius: 50%; background: #f44336; color: #fff; font-size: 23px; font-weight: 600; line-height: 29px; text-align: center; box-shadow: 0 0 0 1px #fff; }
.n1 { left: 469px; top: 476px; }
.n2 { left: 142px; top: 644px; }
.n3 { left: 922px; top: 663px; }
.n4 { left: 1204px; top: 260px; }
.n5 { left: 1634px; top: 985px; }
</style>
